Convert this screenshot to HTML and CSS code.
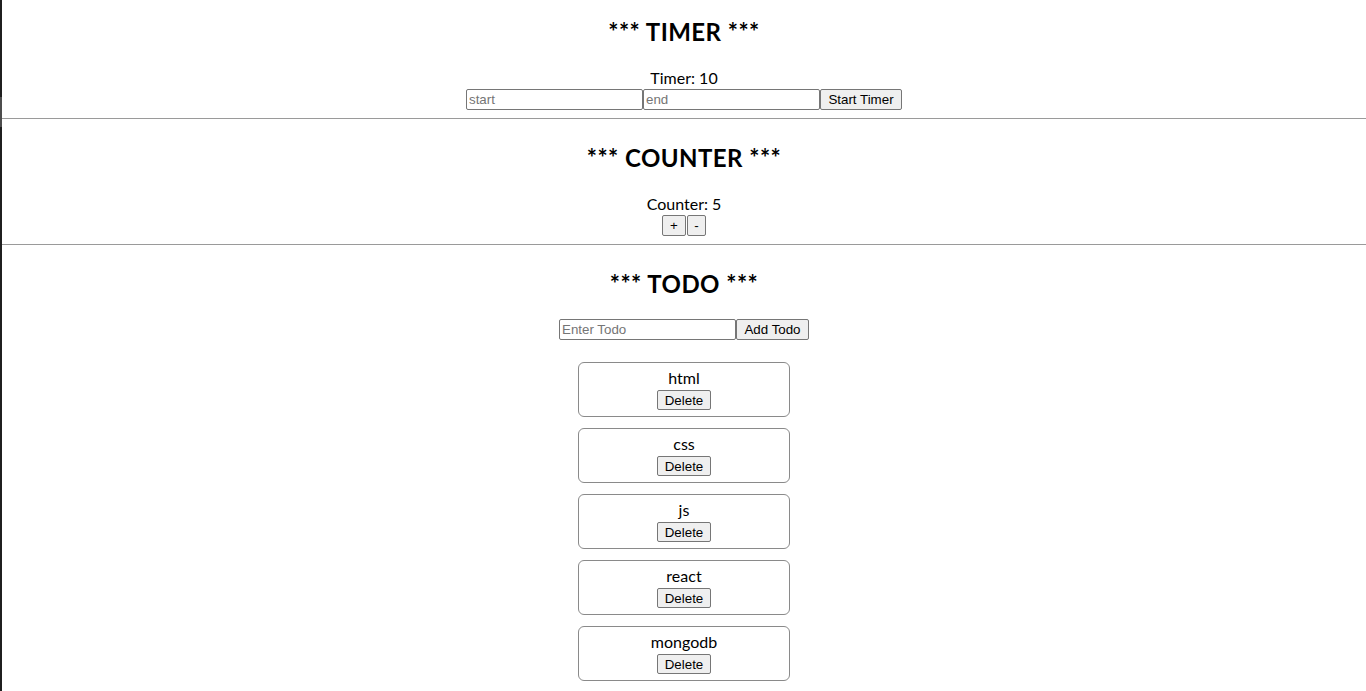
FILE: index.html
```html
<!DOCTYPE html>
<html lang="en">
<head>
<meta charset="utf-8">
<title>Timer Counter Todo</title>
<link rel="stylesheet" href="styles.css">
</head>
<body>
  <section class="block">
    <h2 class="title">*** TIMER ***</h2>
    <p class="value">Timer: 10</p>
    <div class="row">
      <input class="field" type="text" placeholder="start">
      <input class="field" type="text" placeholder="end">
      <button class="btn btn-start">Start Timer</button>
    </div>
  </section>
  <hr class="rule">
  <section class="block">
    <h2 class="title">*** COUNTER ***</h2>
    <p class="value">Counter: 5</p>
    <div class="row">
      <button class="btn btn-plus">+</button>
      <button class="btn btn-minus">-</button>
    </div>
  </section>
  <hr class="rule">
  <section class="block">
    <h2 class="title">*** TODO ***</h2>
    <div class="row">
      <input class="field" type="text" placeholder="Enter Todo">
      <button class="btn btn-add">Add Todo</button>
    </div>
    <ul class="todos">
      <li class="todo"><span class="todo-text">html</span><button class="btn btn-del">Delete</button></li>
      <li class="todo"><span class="todo-text">css</span><button class="btn btn-del">Delete</button></li>
      <li class="todo"><span class="todo-text">js</span><button class="btn btn-del">Delete</button></li>
      <li class="todo"><span class="todo-text">react</span><button class="btn btn-del">Delete</button></li>
      <li class="todo"><span class="todo-text">mongodb</span><button class="btn btn-del">Delete</button></li>
    </ul>
  </section>
</body>
</html>
```

FILE: styles.css
```css
* { box-sizing: border-box; }

html, body { margin: 0; padding: 0; }

body {
  min-height: 100vh;
  padding-top: 1px;
  background: #ffffff;
  color: #000000;
  font-family: Lato, "Noto Sans", sans-serif;
  font-size: 16px;
  border-left: 2px solid #1f1f1f;
  border-image: linear-gradient(to bottom, #1f1f1f 0, #1f1f1f 98px, #4d4d4d 98px, #4d4d4d 128px, #1f1f1f 128px, #1f1f1f 100%) 1;
}

.block {
  display: flex;
  flex-direction: column;
  align-items: center;
  padding: 0;
}

.title {
  margin: 13px 0 19px;
  padding-top: 2px;
  font-size: 24px;
  line-height: 32px;
  font-weight: 700;
  letter-spacing: 0.45px;
}

.value {
  margin: 0 0 1px;
  line-height: 21px;
}

.row {
  display: flex;
  justify-content: center;
  align-items: stretch;
}

.field {
  width: 177px;
  height: 21px;
  margin: 0;
  padding: 1px 2px;
  border: 1px solid #767676;
  border-radius: 2px;
  font-family: "Liberation Sans", Arial, sans-serif;
  font-size: 13.333px;
  color: #000;
  background: #fff;
}

.field::placeholder { color: #757575; }

.btn {
  height: 21px;
  margin: 0;
  padding: 1px 6px;
  border: 1px solid #767676;
  border-radius: 2px;
  background: #efefef;
  color: #000;
  font-family: "Liberation Sans", Arial, sans-serif;
  font-size: 13.333px;
  line-height: 15px;
}

.btn-start { width: 82px; }
.btn-plus { width: 24px; }
.btn-minus { width: 19px; margin-left: 1px; }
.btn-add { width: 73px; }
.btn-del { width: 54px; height: 20px; }

.rule {
  margin: 8px 0;
  border: 0;
  border-top: 1px solid #9a9a9a;
  height: 0;
}

.todos {
  list-style: none;
  margin: 22px 0 0;
  padding: 0;
  display: flex;
  flex-direction: column;
  align-items: center;
  gap: 11px;
}

.todo {
  width: 212px;
  height: 55px;
  padding: 4px 0 6px;
  border: 1px solid #8a8a8a;
  border-radius: 6px;
  display: flex;
  flex-direction: column;
  align-items: center;
}

.todo-text {
  line-height: 22px;
  margin-bottom: 1px;
}
```
